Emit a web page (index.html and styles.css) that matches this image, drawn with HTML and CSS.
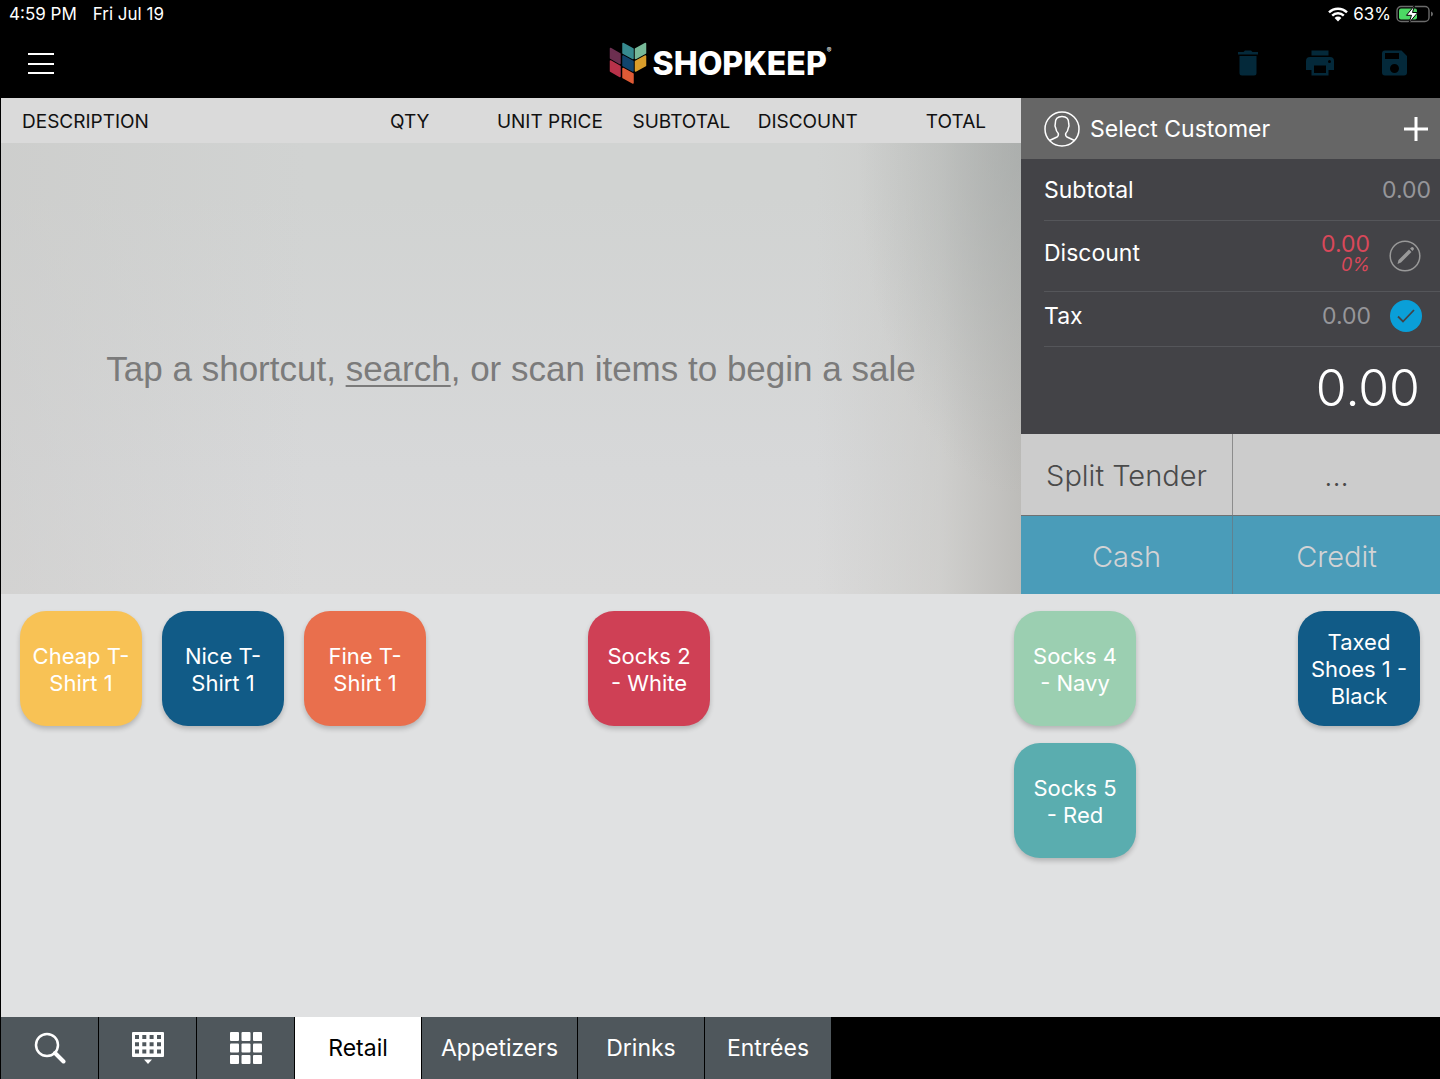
FILE: index.html
```html
<!DOCTYPE html>
<html lang="en">
<head>
    <meta charset="UTF-8">
    <meta name="viewport" content="width=device-width, initial-scale=1.0">
    <title>ShopKeep Register</title>
    <link rel="stylesheet" href="styles.css">
</head>
<body>

    <header class="header">
        <div class="status-bar">
            <span>4:59 PM</span>
            <span>Fri Jul 19</span>
            <div class="status-right">
                <svg width="20" height="15" viewBox="0 0 20 15" fill="none" stroke="#fff" stroke-width="2.4">
                    <path d="M1 5.4a12.8 12.8 0 0 1 18 0M4.2 8.7a8.2 8.2 0 0 1 11.6 0"/>
                    <path d="M10 14.4 6.6 11a4.8 4.8 0 0 1 6.8 0z" fill="#fff" stroke="none"/>
                </svg>
                <span>63%</span>
                <svg width="38" height="18" viewBox="0 0 38 18">
                    <rect x="1" y="1.5" width="32" height="15" rx="4" fill="none" stroke="#6b6b6b" stroke-width="1.4"/>
                    <path d="M35 6.5q2 .6 2 2.5t-2 2.5z" fill="#6b6b6b"/>
                    <rect x="3" y="3.5" width="18" height="11" rx="2" fill="#4cd964"/>
                    <path d="M18.500.5 10.500 10.300h5L13 17.800l8.800-10.300h-5.300z" fill="#fff" stroke="#000" stroke-width="1"/>
                </svg>
            </div>
        </div>

        <nav class="nav">
            <button class="icon-button" aria-label="Menu">
                <svg width="26" height="24" viewBox="0 0 26 24" stroke="#fff" stroke-width="2"><path d="M0 3h26M0 13h26M0 22h26"/></svg>
            </button>
            <a href="#" class="logo">
                <svg width="38" height="42" viewBox="0 0 38 42" stroke-width="1.5" stroke-linejoin="round">
                    <path d="M1.500 6.500 11 12v9.500L1.500 16z" fill="#6c2f50" stroke="#6c2f50"/>
                    <path d="M1.500 19 11 24.500v10L1.500 29z" fill="#b8324a" stroke="#b8324a"/>
                    <path d="M14 1.500 24 7v9.500L14 11z" fill="#378a8f" stroke="#378a8f"/>
                    <path d="M14 14 24 19.500V29l-10-5.500z" fill="#12456d" stroke="#12456d"/>
                    <path d="M14 26.500 24 32v9l-10-5.500z" fill="#df5b36" stroke="#df5b36"/>
                    <path d="M26.500 7 36.500 1.500V11l-10 5.500z" fill="#77b998" stroke="#77b998"/>
                    <path d="M26.500 19.500 36.500 14v9.500l-10 5.500z" fill="#d99e2b" stroke="#d99e2b"/>
                </svg>
                <span class="logo-text">SHOPKEEP</span><span class="logo-mark">®</span>
            </a>
            <div class="nav-actions">
                <button class="icon-button" aria-label="Delete sale">
                    <svg width="20" height="26" viewBox="0 0 20 26" fill="#04293a"><path d="M0 2h5.500L7 .5h6L14.500 2H20v2.500H0zM1.500 6h17v17q0 2.500-2.500 2.500H4q-2.500 0-2.500-2.500z"/></svg>
                </button>
                <button class="icon-button" aria-label="Print">
                    <svg width="28" height="26" viewBox="0 0 28 26" fill="#04293a">
                        <path d="M5.500.5h17v5h-17z"/>
                        <path fill-rule="evenodd" d="M4 7h20q4 0 4 4v9h-5.500v5.500h-17V20H0v-9q0-4 4-4zM8 15.500V23h12v-7.500zM23.500 10a1.500 1.500 0 1 0 0 3 1.500 1.500 0 0 0 0-3z"/>
                    </svg>
                </button>
                <button class="icon-button" aria-label="Save">
                    <svg width="25" height="26" viewBox="0 0 25 26" fill="#04293a"><path fill-rule="evenodd" d="M3 .5h16.500L25 6v16.500q0 3-3 3H3q-3 0-3-3v-19q0-3 3-3zM3 3v6h14V3zM12.500 14a4.500 4.500 0 1 0 0 9 4.500 4.500 0 0 0 0-9z"/></svg>
                </button>
            </div>
        </nav>
    </header>

    <main class="main">
        <section class="sale">
            <table class="items">
                <thead>
                    <tr>
                        <th class="description">DESCRIPTION</th>
                        <th class="qty">QTY</th>
                        <th class="unit">UNIT PRICE</th>
                        <th class="amount">SUBTOTAL</th>
                        <th class="amount">DISCOUNT</th>
                        <th class="total">TOTAL</th>
                    </tr>
                </thead>
            </table>
            <p class="empty">Tap a shortcut, <a href="#">search</a>, or scan items to begin a sale</p>
        </section>

        <aside class="summary">
            <button class="customer">
                <svg width="36" height="36" viewBox="0 0 36 36" fill="none" stroke="#fff" stroke-width="1.5">
                    <circle cx="18" cy="18" r="17"/>
                    <path d="M5.500 29.500 13 26q1.800-1 1.300-3.500-2.300-2.500-2.600-5.500-1.200-2-.4-4.500Q11 5.500 18 5.500t6.700 7q.8 2.500-.4 4.500-.3 3-2.600 5.500-.5 2.500 1.300 3.500l7.500 3.500"/>
                </svg>
                <span>Select Customer</span>
                <svg class="plus" width="24" height="24" viewBox="0 0 24 24" stroke="#fff" stroke-width="3"><path d="M0 12h24M12 0v24"/></svg>
            </button>

            <div class="row subtotal">
                <span>Subtotal</span>
                <span class="value">0.00</span>
            </div>
            <div class="row discount">
                <span class="label">Discount</span>
                <span class="value red">0.00<em>0%</em></span>
                <button class="icon-button" aria-label="Edit discount">
                    <svg width="32" height="32" viewBox="0 0 32 32">
                        <circle cx="16" cy="16" r="14.8" fill="none" stroke="#999" stroke-width="1.5"/>
                        <path d="m8.500 24 1-4L20 9.500l2.500 2.500L12 22.500zM21 8.500l1.500-1.300q1.200-.5 2 .5t.2 1.800L23.500 11z" fill="#999"/>
                    </svg>
                </button>
            </div>
            <div class="row tax">
                <label for="tax">Tax</label>
                <span class="value">0.00</span>
                <span class="check">
                    <input type="checkbox" id="tax" checked>
                    <svg width="18" height="14" viewBox="0 0 18 14" fill="none" stroke="#424347" stroke-width="1.8"><path d="m1 7.500 5 5L17 1"/></svg>
                </span>
            </div>
            <div class="grand-total">0.00</div>

            <div class="tender">
                <button class="split">Split Tender</button>
                <button class="split">...</button>
                <button class="pay">Cash</button>
                <button class="pay">Credit</button>
            </div>
        </aside>
    </main>

    <section class="shortcuts">
        <button class="tile yellow">Cheap T-<br>Shirt 1</button>
        <button class="tile blue">Nice T-<br>Shirt 1</button>
        <button class="tile orange">Fine T-<br>Shirt 1</button>
        <button class="tile crimson">Socks 2<br>- White</button>
        <button class="tile mint">Socks 4<br>- Navy</button>
        <button class="tile blue last">Taxed<br>Shoes 1 -<br>Black</button>
        <button class="tile teal">Socks 5<br>- Red</button>
    </section>

    <footer class="tabs">
        <button class="tool" aria-label="Search">
            <svg width="32" height="32" viewBox="0 0 32 32" fill="none" stroke="#fff"><circle cx="13" cy="13" r="11" stroke-width="2.5"/><path d="m21 21 8.500 8.500" stroke-width="4" stroke-linecap="round"/></svg>
        </button>
        <button class="tool" aria-label="Keyboard">
            <svg width="32" height="32" viewBox="0 0 32 32" fill="#fff">
                <path fill-rule="evenodd" d="M1 0h30q1 0 1 1v23q0 1-1 1H1q-1 0-1-1V1q0-1 1-1zM3 3v4h4V3zm7.300 0v4h4V3zm7.300 0v4h4V3zM25 3v4h4V3zM3 10.300v4h4v-4zm7.300 0v4h4v-4zm7.300 0v4h4v-4zm7.400 0v4h4v-4zM3 17.600v4h4v-4zm7.300 0v4h4v-4zm7.300 0v4h4v-4zm7.400 0v4h4v-4z"/>
                <path d="M12 27.500h8L16 32z"/>
            </svg>
        </button>
        <button class="tool" aria-label="Shortcuts">
            <svg width="32" height="32" viewBox="0 0 32 32" fill="#fff">
                <rect width="9" height="9" rx="1"/><rect x="11.5" width="9" height="9" rx="1"/><rect x="23" width="9" height="9" rx="1"/>
                <rect y="11.5" width="9" height="9" rx="1"/><rect x="11.5" y="11.5" width="9" height="9" rx="1"/><rect x="23" y="11.5" width="9" height="9" rx="1"/>
                <rect y="23" width="9" height="9" rx="1"/><rect x="11.5" y="23" width="9" height="9" rx="1"/><rect x="23" y="23" width="9" height="9" rx="1"/>
            </svg>
        </button>
        <button class="tab active">Retail</button>
        <button class="tab wide">Appetizers</button>
        <button class="tab">Drinks</button>
        <button class="tab">Entrées</button>
    </footer>

</body>
</html>
```
FILE: styles.css
```css
* {
    box-sizing: border-box;
}
body {
    margin: 0;
    min-height: 100vh;
    display: flex;
    flex-direction: column;
    background: #000;
    font-family: Inter, sans-serif;
    font-size: 23px;
    color: #fff;
}
button {
    margin: 0;
    padding: 0;
    border: none;
    background: none;
    font: inherit;
    color: inherit;
    cursor: pointer;
}
svg {
    display: block;
    flex: none;
}

/* top bar */
.status-bar {
    display: flex;
    align-items: center;
    gap: 16px;
    height: 28px;
    padding: 0 6px 0 9px;
    font-size: 17px;
}
.status-right {
    display: flex;
    align-items: center;
    gap: 5px;
    margin-left: auto;
}
.nav {
    display: grid;
    grid-template-columns: 1fr auto 1fr;
    align-items: center;
    height: 70px;
    padding: 0 28px;
}
.icon-button {
    justify-self: start;
}
.logo {
    display: flex;
    align-items: center;
    gap: 6px;
    color: #fff;
    text-decoration: none;
}
.logo-text {
    font-size: 32px;
    font-weight: 800;
}
.logo-mark {
    align-self: flex-start;
    margin-left: -6px;
    padding-top: 4px;
    font-size: 7px;
}
.nav-actions {
    justify-self: end;
    display: flex;
    gap: 48px;
    padding-right: 5px;
}

/* sale */
.main {
    display: grid;
    grid-template-columns: 1020fr 419fr;
    height: 496px;
    margin-left: 1px;
}
.sale {
    display: flex;
    flex-direction: column;
    background:
        radial-gradient(ellipse 16% 70% at 100% 10%, rgba(160, 166, 165, 0.6), transparent),
        linear-gradient(90deg, rgba(200, 199, 197, 0.4) 0, transparent 30%, transparent 80%, rgba(198, 197, 193, 0.5) 92%, #bdbcb9 100%),
        linear-gradient(#d1d3d2 20%, #d7d8d9 75%, #dadada);
}
.items {
    width: 100%;
    table-layout: fixed;
    border-collapse: collapse;
    background: #dadada;
    color: #111;
    font-size: 19px;
}
.items th {
    height: 45px;
    padding: 1px 0 0;
    font-weight: 400;
    text-align: right;
    white-space: nowrap;
}
.items .description {
    padding-left: 21px;
    text-align: left;
}
.qty {
    width: 10%;
}
.unit {
    width: 17%;
}
.amount {
    width: 12.5%;
}
.items .total {
    width: 16%;
    padding-right: 35px;
}
.empty {
    margin: auto;
    font-family: "Liberation Sans", Arial, sans-serif;
    font-size: 35px;
    color: #7b7b7b;
}
.empty a {
    color: inherit;
    text-underline-offset: 4px;
    text-decoration-thickness: 2px;
}

/* summary */
.summary {
    display: flex;
    flex-direction: column;
    background: #434347;
}
.customer {
    display: flex;
    align-items: center;
    gap: 10px;
    height: 61px;
    padding: 0 12px 0 23px;
    background: #666;
}
.plus {
    margin-left: auto;
}
.row {
    display: flex;
    align-items: center;
    margin-left: 23px;
    border-bottom: 1px solid #55565a;
}
.value {
    margin-left: auto;
    color: #96969a;
}
.subtotal {
    height: 62px;
    padding-right: 9px;
}
.discount {
    height: 71px;
    gap: 19px;
    padding-right: 19px;
}
.discount .label {
    padding-bottom: 6px;
}
.tax {
    height: 55px;
    gap: 19px;
    padding: 0 18px 6px 0;
}
.red {
    display: flex;
    flex-direction: column;
    align-items: flex-end;
    padding-bottom: 4px;
    color: #d9485a;
    line-height: 22px;
}
.red em {
    font-size: 18px;
    line-height: 20px;
}
.check {
    position: relative;
}
.check input {
    appearance: none;
    display: block;
    width: 32px;
    height: 32px;
    margin: 0;
    border-radius: 50%;
    background: #0a9fd8;
}
.check svg {
    position: absolute;
    top: 9px;
    left: 7px;
    pointer-events: none;
}
.grand-total {
    flex: 1;
    display: flex;
    align-items: center;
    justify-content: flex-end;
    padding: 0 20px 6px 0;
    font-size: 50px;
    font-weight: 300;
}
.tender {
    display: grid;
    grid-template-columns: 212fr 207fr;
    font-size: 29px;
    font-weight: 300;
}
.tender button {
    padding-top: 2px;
}
.tender button:nth-child(odd) {
    border-right: 1px solid #8c8c8c;
}
.split {
    height: 81px;
    background: #ccc;
    color: #4a4a4a;
}
.pay {
    height: 79px;
    border-top: 1px solid #6f7172;
    background: #4a9cb9;
    color: #d2d3d5;
}
.tender .pay:nth-child(odd) {
    border-right-color: #5f8291;
}

/* shortcut tiles */
.shortcuts {
    flex: 1;
    display: grid;
    grid-template-columns: repeat(10, 1fr);
    align-content: start;
    gap: 17px 20px;
    margin-left: 1px;
    padding: 17px 20px 17px 19px;
    background: #e0e1e2;
}
.tile {
    height: 115px;
    padding-top: 2px;
    border-radius: 26px;
    box-shadow: 0 3px 5px rgba(0, 0, 0, 0.2);
    font-size: 22px;
    line-height: 27px;
}
.yellow {
    background: #f8c255;
}
.blue {
    background: #115b87;
}
.orange {
    background: #e96f4d;
}
.crimson {
    grid-column: 5;
    background: #cf4055;
}
.mint {
    grid-column: 8;
    background: #9bcfb1;
}
.teal {
    grid-column: 8;
    background: #5aadaf;
}
.last {
    grid-column: 10;
}

/* bottom tabs */
.tabs {
    display: flex;
    gap: 1px;
    height: 62px;
    padding-left: 1px;
}
.tool, .tab {
    display: flex;
    align-items: center;
    justify-content: center;
    background: #4f575c;
}
.tool {
    width: 97px;
}
.tab {
    width: 126px;
}
.wide {
    width: 155px;
}
.active {
    background: #fff;
    color: #000;
}
```
